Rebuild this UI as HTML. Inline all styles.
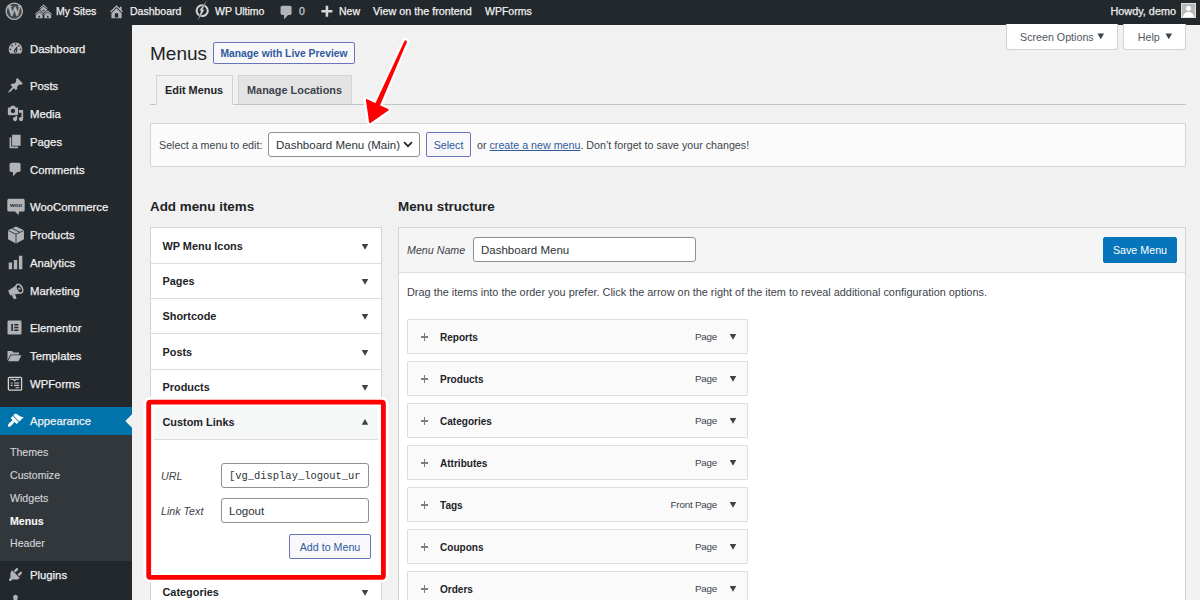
<!DOCTYPE html>
<html lang="en">
<head>
<meta charset="utf-8">
<title>Menus</title>
<style>
html,body{margin:0;padding:0;}
body{width:1200px;height:600px;overflow:hidden;position:relative;background:#f1f1f1;font-family:"Liberation Sans",sans-serif;font-size:10.7px;color:#3c434a;}
.a{position:absolute;}
.t{position:absolute;white-space:nowrap;line-height:14px;height:14px;}
.b{font-weight:bold;}
.i{font-style:italic;}
#bar{left:0;top:0;width:1200px;height:24.5px;background:#23282d;}
#side{left:0;top:24px;width:131.5px;height:576px;background:#23282d;}
#bar .t{color:#f0f0f1;font-size:10.5px;top:4px;-webkit-text-stroke:.25px #f0f0f1;}
#side .t{color:#f0f0f1;font-size:11.3px;left:30px;-webkit-text-stroke:.25px #f0f0f1;}
#side .s{color:#d0d3d5;font-size:10.6px;left:10px;-webkit-text-stroke:.15px #d0d3d5;}
.box{position:absolute;box-sizing:border-box;border:1px solid #d2d3d6;background:#fff;}
.btn{position:absolute;box-sizing:border-box;border:1px solid #6c74b8;border-radius:2px;background:#f8f8fa;color:#2f5a9e;text-align:center;white-space:nowrap;}
.inp{position:absolute;box-sizing:border-box;border:1px solid #8c8f94;border-radius:3px;background:#fff;}
.tri{position:absolute;width:6.6px;height:5.8px;background:#3c434a;clip-path:polygon(0 0,100% 0,50% 100%);margin-left:.7px;}
.triu{position:absolute;width:6.6px;height:5.8px;background:#3c434a;clip-path:polygon(0 100%,100% 100%,50% 0);margin-left:.7px;}
.mi{position:absolute;box-sizing:border-box;left:406.5px;width:341.5px;height:35px;border:1px solid #dedede;border-radius:1px;background:#fafafa;}
.pl{position:absolute;left:13px;top:16.3px;width:7.6px;height:1.5px;background:#7e7e7e;}
.pl:after{content:"";position:absolute;left:3.05px;top:-3.05px;width:1.5px;height:7.6px;background:#7e7e7e;}
.mi .t{top:10.5px;}
</style>
</head>
<body>
<!-- ADMIN BAR -->
<div id="bar" class="a">
<svg class="a" style="left:4.5px;top:2px;" width="18.5" height="18.5" viewBox="0 0 18 18"><circle cx="9" cy="9" r="7.900" fill="#b0b4b8" fill-opacity=".22" stroke="#b0b4b8" stroke-width="1.300"/><text x="9" y="13.900" font-family="'Liberation Serif',serif" font-size="14.500" font-weight="bold" text-anchor="middle" fill="#b4b7ba" stroke="#b4b7ba" stroke-width=".35" textLength="13.600" lengthAdjust="spacingAndGlyphs">W</text></svg>
<svg class="a" style="left:34.500px;top:3px;" width="17" height="17" viewBox="0 0 20 20"><path fill="#b0b4b8" d="M14.270 6.870L10 3.140 5.730 6.870 5 6.140l5-4.380 5 4.380zM14 8.420l-4.050 3.430L6 8.380v-.740l4-3.500 4 3.500v.780zM11 9.700V8H9v1.700h2zm-1.730 4.030L5 10 .730 13.730 0 13l5-4.380L10 13zm10 0L15 10l-4.270 3.730L10 13l5-4.380L20 13zM5 11l4 3.500V18H1v-3.500zm10 0l4 3.500V18h-8v-3.500zm-9 6v-2H4v2h2zm10 0v-2h-2v2h2z"/></svg>
<div class="t" style="left:56px;">My Sites</div>
<svg class="a" style="left:108px;top:3px;" width="17" height="17" viewBox="0 0 20 20"><path fill="#b0b4b8" d="M16 8.500l1.530 1.530-1.060 1.060L10 4.620l-6.470 6.470-1.060-1.060L10 2.500l4 4v-2h2v4zm-6-2.460l6 5.990V18H4v-5.970zM12 17v-5H8v5h4z"/></svg>
<div class="t" style="left:130px;">Dashboard</div>
<svg class="a" style="left:193px;top:0px;" width="18" height="22" viewBox="0 0 18 22"><ellipse cx="9.200" cy="10.700" rx="5.600" ry="5.400" fill="none" stroke="#d5d7d9" stroke-width="2"/><path d="M14.200 0L9.800 9.500l1.800.3L4.600 21l3.200-10.300-1.700-.2z" fill="#d5d7d9" stroke="#23282d" stroke-width=".5"/></svg>
<div class="t" style="left:215px;">WP Ultimo</div>
<svg class="a" style="left:277.500px;top:3.500px;" width="17" height="17" viewBox="0 0 20 20"><path fill="#b0b4b8" d="M5 2h9c1.100 0 2 .900 2 2v7c0 1.100-.900 2-2 2h-2l-5 5v-5H5c-1.100 0-2-.900-2-2V4c0-1.100.900-2 2-2z"/></svg>
<div class="t" style="left:299px;color:#a7aaad;">0</div>
<svg class="a" style="left:317.500px;top:3.500px;" width="17" height="17" viewBox="0 0 20 20"><path fill="#d5d7d9" d="M17 7v3h-5v5H9v-5H4V7h5V2h3v5h5z"/></svg>
<div class="t" style="left:339px;">New</div>
<div class="t" style="left:373px;font-size:10.800px;">View on the frontend</div>
<div class="t" style="left:485px;">WPForms</div>
<div class="t" style="left:1110.500px;font-size:10.850px;">Howdy, demo</div>
<div class="a" style="left:1181.200px;top:3.300px;width:14.600px;height:14.600px;background:#b9b9b9;overflow:hidden;box-sizing:border-box;border:1px solid #dedede;"><div class="a" style="left:4.300px;top:2px;width:4.600px;height:4.800px;border-radius:50%;background:#fff;"></div><div class="a" style="left:1.200px;top:7.300px;width:10.600px;height:10px;border-radius:50% 50% 0 0;background:#fff;"></div></div>
</div>
<!-- SIDEBAR -->
<div id="side" class="a">
<div class="a" style="left:0;top:382.700px;width:131.500px;height:28.300px;background:#0073aa;"></div>
<div class="a" style="left:125.300px;top:390.300px;width:6.700px;height:13.400px;background:#f1f1f1;clip-path:polygon(100% 0,0 50%,100% 100%);"></div>
<div class="a" style="left:0;top:411px;width:131.500px;height:126px;background:#32373c;"></div>
<svg class="a" style="left:7px;top:16.4px;" width="17" height="17" viewBox="0 0 20 20"><path fill="#b0b4b8" d="M3.760 16h12.480c1.100-1.370 1.760-3.110 1.760-5 0-4.420-3.580-8-8-8s-8 3.580-8 8c0 1.890.660 3.630 1.760 5zM10 4c.550 0 1 .450 1 1s-.450 1-1 1-1-.450-1-1 .450-1 1-1zM6 6c.550 0 1 .450 1 1s-.450 1-1 1-1-.450-1-1 .450-1 1-1zm8 0c.550 0 1 .450 1 1s-.450 1-1 1-1-.450-1-1 .450-1 1-1zm-5.370 5.550L12 7v6c0 1.100-.900 2-2 2s-2-.900-2-2c0-.570.240-1.080.630-1.450zM4 10c.550 0 1 .450 1 1s-.450 1-1 1-1-.450-1-1 .450-1 1-1zm12 0c.550 0 1 .450 1 1s-.450 1-1 1-1-.450-1-1 .450-1 1-1zm-5 3c0-.550-.450-1-1-1s-1 .450-1 1 .450 1 1 1 1-.450 1-1z"/></svg><div class="t b" style="top:18px;font-weight:normal;">Dashboard</div>
<svg class="a" style="left:7px;top:53.4px;" width="17" height="17" viewBox="0 0 20 20"><path fill="#b0b4b8" d="M10.440 3.020l1.820-1.820 6.360 6.350-1.830 1.820c-1.050-.680-2.480-.570-3.410.360l-.750.750c-.920.930-1.040 2.350-.350 3.410l-1.830 1.820-2.410-2.410-2.800 2.790c-.420.420-3.380 2.710-3.800 2.290s1.860-3.390 2.280-3.810l2.790-2.790L4.100 9.360l1.830-1.820c1.050.690 2.480.570 3.400-.360l.750-.750c.930-.920 1.050-2.350.360-3.410z"/></svg><div class="t b" style="top:55px;font-weight:normal;">Posts</div>
<svg class="a" style="left:7px;top:81.4px;" width="17" height="17" viewBox="0 0 20 20"><path fill="#b0b4b8" d="M13 11V4c0-.550-.450-1-1-1h-1.670L9 1H5L3.670 3H2c-.550 0-1 .450-1 1v7c0 .550.450 1 1 1h10c.550 0 1-.450 1-1zM7 4.500c1.380 0 2.500 1.120 2.500 2.500S8.380 9.500 7 9.500 4.500 8.380 4.500 7 5.620 4.500 7 4.500zM14 6h5v10.500c0 1.380-1.120 2.500-2.500 2.500S14 17.880 14 16.500s1.120-2.500 2.500-2.500c.170 0 .340.020.500.050V9h-3V6zm-4 8.050V13h2v3.500c0 1.380-1.120 2.500-2.500 2.500S7 17.880 7 16.500 8.120 14 9.500 14c.170 0 .340.020.500.050z"/></svg><div class="t b" style="top:83px;font-weight:normal;">Media</div>
<svg class="a" style="left:7px;top:109.4px;" width="17" height="17" viewBox="0 0 20 20"><path fill="#b0b4b8" d="M6 15V2h10v13H6zm-1 1h8v2H3V5h2v11z"/></svg><div class="t b" style="top:111px;font-weight:normal;">Pages</div>
<svg class="a" style="left:7px;top:137.4px;" width="17" height="17" viewBox="0 0 20 20"><path fill="#b0b4b8" d="M5 2h9c1.100 0 2 .900 2 2v7c0 1.100-.900 2-2 2h-2l-5 5v-5H5c-1.100 0-2-.900-2-2V4c0-1.100.900-2 2-2z"/></svg><div class="t b" style="top:139px;font-weight:normal;">Comments</div>
<svg class="a" style="left:6.5px;top:174.0px;" width="18" height="18" viewBox="0 0 17 17"><path d="M1.800 0.800h13.400a1.500 1.500 0 0 1 1.500 1.500v9a1.500 1.500 0 0 1-1.500 1.500h-3.700l-.6 3.200-3.400-3.200h-5.700a1.500 1.500 0 0 1-1.500-1.500v-9a1.500 1.500 0 0 1 1.500-1.500z" fill="#b0b4b8"/><text x="8.500" y="8.800" font-family="'Liberation Sans',sans-serif" font-size="5.800" font-weight="bold" text-anchor="middle" fill="#23282d">woo</text></svg><div class="t b" style="top:176px;font-weight:normal;">WooCommerce</div>
<svg class="a" style="left:6.5px;top:202.0px;" width="18" height="18" viewBox="0 0 17 17"><path d="M8.500 0.500L16 4v8.600l-7.500 3.900-7.500-3.900v-8.600z" fill="#b0b4b8"/><path d="M1.300 4.300L8.500 7.800l7.200-3.500M8.500 7.800v8.400" stroke="#23282d" stroke-width=".8" fill="none"/><path d="M4.800 2.300l7.400 3.700" stroke="#23282d" stroke-width=".8"/></svg><div class="t b" style="top:204px;font-weight:normal;">Products</div>
<svg class="a" style="left:7px;top:230.4px;" width="17" height="17" viewBox="0 0 20 20"><path fill="#b0b4b8" d="M18 18V2h-4v16h4zm-6 0V7H8v11h4zm-6 0v-8H2v8h4z"/></svg><div class="t b" style="top:232px;font-weight:normal;">Analytics</div>
<svg class="a" style="left:6.5px;top:258.0px;" width="18" height="18" viewBox="0 0 17 17"><path d="M1 8.300L9.800 2.300l4 8.200-10.600 2.300z" fill="#b0b4b8"/><path d="M4.600 12.400l3-.7 1.500 3.900-2.700.8z" fill="#b0b4b8"/><ellipse cx="11.700" cy="6.300" rx="2.700" ry="4.500" transform="rotate(-27 11.700 6.300)" fill="#23282d" stroke="#b0b4b8" stroke-width="1.500"/><circle cx="11.700" cy="6.300" r="1.100" fill="#b0b4b8"/></svg><div class="t b" style="top:260px;font-weight:normal;">Marketing</div>
<svg class="a" style="left:5.700px;top:294.500px;" width="17" height="17" viewBox="0 0 17 17"><rect x="1.500" y="1.500" width="14" height="14" rx="1.200" fill="#b0b4b8"/><path d="M5.300 5h1.600v7h-1.600zM8.300 5h4v1.400h-4zM8.300 7.800h4v1.400h-4zM8.300 10.600h4v1.400h-4z" fill="#23282d"/></svg><div class="t b" style="top:297px;font-weight:normal;">Elementor</div>
<svg class="a" style="left:6px;top:323.500px;" width="17" height="17" viewBox="0 0 17 17"><path d="M1.500 3h4.500l1.500 1.500h5.500v2h-8.500l-3 6z" fill="#b0b4b8"/><path d="M5 7.300h10.500l-3 6h-10.500z" fill="#b0b4b8"/></svg><div class="t b" style="top:325px;font-weight:normal;">Templates</div>
<svg class="a" style="left:6.500px;top:352px;" width="16" height="16" viewBox="0 0 17 17"><rect x="1.500" y="1.500" width="14" height="13.500" rx="1" fill="none" stroke="#d0d2d4" stroke-width="1.400"/><path d="M3.500 3.500h3l1.500 1.500 1.500-1.500h3.500" stroke="#d0d2d4" stroke-width="1.200" fill="none"/><path d="M4 7.500h2M7.500 7.500h5.500M4 10h2M7.500 10h5.500M9 12.500h4" stroke="#d0d2d4" stroke-width="1.200"/></svg><div class="t b" style="top:353px;font-weight:normal;">WPForms</div>
<svg class="a" style="left:7px;top:388.4px;" width="17" height="17" viewBox="0 0 20 20"><path fill="#fff" d="M14.480 11.060L7.410 3.990l1.500-1.500c.500-.560 2.300-.470 3.510.320 1.210.800 1.430 1.280 2.910 2.100 1.180.640 2.450 1.260 4.450.850zm-.710.710L6.700 4.700 4.930 6.470c-.390.390-.390 1.020 0 1.410l1.060 1.060c.390.390.390 1.030 0 1.420-.600.600-1.430 1.110-2.210 1.690-.350.260-.700.530-1.010.840C1.430 14.230.400 16.080 1.400 17.070c.990 1 2.840-.030 4.180-1.360.310-.310.580-.660.850-1.020.570-.780 1.080-1.610 1.690-2.210.390-.390 1.020-.390 1.410 0l1.060 1.060c.390.390 1.020.390 1.410 0z"/></svg><div class="t b" style="top:390px;font-weight:normal;">Appearance</div>
<svg class="a" style="left:7px;top:542.4px;" width="17" height="17" viewBox="0 0 20 20"><path fill="#b0b4b8" d="M13.110 4.360L9.870 7.600 8 5.730l3.240-3.240c.350-.340 1.050-.200 1.560.320.520.510.660 1.210.310 1.550zm-8 1.770l.910-1.120 9.010 9.010-1.190.840c-.710.710-2.630 1.160-3.820 1.160H6.140L4.900 17.260c-.590.590-1.540.590-2.120 0-.590-.580-.590-1.530 0-2.120l1.240-1.240v-3.880c0-1.130.400-3.190 1.090-3.890zm7.260 3.970l3.240-3.240c.340-.350 1.040-.210 1.550.310.520.510.660 1.210.310 1.550l-3.240 3.250z"/></svg><div class="t b" style="top:544px;font-weight:normal;">Plugins</div>
<div class="t s" style="top:421px;">Themes</div>
<div class="t s" style="top:444px;">Customize</div>
<div class="t s" style="top:467px;">Widgets</div>
<div class="t s b" style="color:#fff;top:490px;">Menus</div>
<div class="t s" style="top:512px;">Header</div>
<svg class="a" style="left:7px;top:569.300px;" width="17" height="17" viewBox="0 0 20 20"><path fill="#b0b4b8" d="M10 9.250c-2.270 0-2.730-3.440-2.730-3.440C7 4.020 7.820 2 9.970 2c2.160 0 2.980 2.020 2.710 3.810 0 0-.410 3.440-2.680 3.440zm0 2.570L12.720 10c2.390 0 4.520 2.330 4.520 4.530v2.490s-3.650 1.130-7.240 1.130c-3.650 0-7.240-1.130-7.240-1.130v-2.490c0-2.250 1.940-4.480 4.470-4.480z"/></svg>
</div>
<!-- MAIN -->
<div id="main">
<!-- screen options / help -->
<div class="box" style="left:1006px;top:24px;width:112px;height:26px;border-top:none;border-radius:0 0 3px 3px;"></div>
<div class="t" style="left:1020px;top:30px;color:#50575e;">Screen Options</div>
<div class="tri" style="left:1096.800px;top:33.400px;"></div>
<div class="box" style="left:1123px;top:24px;width:63px;height:26px;border-top:none;border-radius:0 0 3px 3px;"></div>
<div class="t" style="left:1137.800px;top:30px;color:#50575e;">Help</div>
<div class="tri" style="left:1164.800px;top:33.400px;"></div>

<!-- title -->
<div class="t" style="left:150px;top:41.600px;font-size:19px;line-height:24px;height:24px;color:#1d2327;">Menus</div>
<div class="btn b" style="left:213px;top:42px;width:142px;height:22px;line-height:22px;font-size:10.3px;">Manage with Live Preview</div>

<!-- tabs -->
<div class="a" style="left:150px;top:104px;width:1036px;height:1px;background:#c3c4c7;"></div>
<div class="box" style="left:156px;top:75px;width:77px;height:30px;background:#f1f1f1;border-bottom-color:#f1f1f1;"></div>
<div class="t b" style="left:165px;top:83px;font-size:10.9px;color:#1d2327;">Edit Menus</div>
<div class="box" style="left:238px;top:75px;width:114px;height:29px;background:#e4e4e5;border-bottom:none;"></div>
<div class="t b" style="left:247px;top:83px;font-size:10.9px;color:#3c434a;">Manage Locations</div>

<!-- select menu panel -->
<div class="box" style="left:150px;top:123px;width:1036px;height:43.500px;background:#fbfbfb;border-color:#d5d6d8;"></div>
<div class="t" style="left:159px;top:138px;">Select a menu to edit:</div>
<div class="inp" style="left:268px;top:132px;width:152px;height:25px;"></div>
<div class="t" style="left:276px;top:138px;font-size:11.5px;color:#2c3338;">Dashboard Menu (Main)</div>
<svg class="a" style="left:403px;top:141px;" width="10" height="7" viewBox="0 0 10 7"><path d="M1 1.2 L5 5.2 L9 1.2" fill="none" stroke="#23282d" stroke-width="1.7"/></svg>
<div class="btn" style="left:426px;top:132px;width:45px;height:25px;line-height:25px;">Select</div>
<div class="t" style="left:477px;top:138px;">or <span style="color:#2f5a9e;text-decoration:underline;">create a new menu</span>. Don’t forget to save your changes!</div>

<!-- left column -->
<div class="t b" style="left:150px;top:200px;font-size:13.4px;color:#1d2327;">Add menu items</div>
<div class="box" style="left:150px;top:227px;width:232px;height:380px;"></div>
<div class="t b" style="left:162.500px;top:239px;color:#1d2327;font-size:10.9px;">WP Menu Icons</div><div class="tri" style="left:361px;top:244px;"></div>
<div class="a" style="left:151px;top:263px;width:230px;height:1px;background:#dcdcde;"></div>
<div class="t b" style="left:162.500px;top:274px;color:#1d2327;font-size:10.9px;">Pages</div><div class="tri" style="left:361px;top:279px;"></div>
<div class="a" style="left:151px;top:298px;width:230px;height:1px;background:#dcdcde;"></div>
<div class="t b" style="left:162.500px;top:309px;color:#1d2327;font-size:10.9px;">Shortcode</div><div class="tri" style="left:361px;top:314px;"></div>
<div class="a" style="left:151px;top:333px;width:230px;height:1px;background:#dcdcde;"></div>
<div class="t b" style="left:162.500px;top:345px;color:#1d2327;font-size:10.9px;">Posts</div><div class="tri" style="left:361px;top:350px;"></div>
<div class="a" style="left:151px;top:369px;width:230px;height:1px;background:#dcdcde;"></div>
<div class="t b" style="left:162.500px;top:380px;color:#1d2327;font-size:10.9px;">Products</div><div class="tri" style="left:361px;top:385px;"></div>
<div class="a" style="left:151px;top:404px;width:230px;height:36px;background:#f6f7f7;border-top:1px solid #dcdcde;border-bottom:1px solid #dcdcde;box-sizing:border-box;"></div>
<div class="t b" style="left:162.500px;top:415px;color:#1d2327;font-size:10.9px;">Custom Links</div><div class="triu" style="left:361px;top:419px;"></div>
<div class="t i" style="left:161px;top:469px;">URL</div>
<div class="inp" style="left:221px;top:463px;width:148px;height:25px;"></div>
<div class="t" style="left:229px;top:469px;font-family:'Liberation Mono',monospace;font-size:10.45px;color:#2c3338;">[vg_display_logout_ur</div>
<div class="t i" style="left:161px;top:504px;">Link Text</div>
<div class="inp" style="left:221px;top:498px;width:148px;height:25px;"></div>
<div class="t" style="left:229px;top:504px;font-size:11.5px;color:#2c3338;">Logout</div>
<div class="btn" style="left:289px;top:534px;width:82px;height:25px;line-height:24px;">Add to Menu</div>
<div class="a" style="left:151px;top:575px;width:230px;height:1px;background:#dcdcde;"></div>
<div class="t b" style="left:162.500px;top:585px;color:#1d2327;font-size:10.9px;">Categories</div><div class="tri" style="left:361px;top:590px;"></div>

<!-- red box -->
<svg class="a" style="left:136px;top:390px;" width="260" height="200" viewBox="136 390 260 200">
<defs><filter id="gl2" x="-5%" y="-5%" width="110%" height="110%"><feGaussianBlur stdDeviation=".6"/></filter></defs>
<rect x="148.700" y="402.100" width="234.700" height="175.200" rx="1.800" fill="none" stroke="#fff" stroke-width="10.600" stroke-opacity=".92" filter="url(#gl2)"/>
<rect x="148.700" y="402.100" width="234.700" height="175.200" rx="1.500" fill="none" stroke="#fe0000" stroke-width="4.800" stroke-linejoin="round"/>
</svg>

<!-- right column -->
<div class="t b" style="left:398px;top:200px;font-size:13.4px;color:#1d2327;">Menu structure</div>
<div class="box" style="left:398px;top:227px;width:788px;height:380px;"></div>
<div class="a" style="left:399px;top:228px;width:786px;height:45px;background:#f5f5f5;border-bottom:1px solid #dcdcde;box-sizing:border-box;"></div>
<div class="t i" style="left:407px;top:243px;">Menu Name</div>
<div class="inp" style="left:473px;top:237px;width:223px;height:25px;"></div>
<div class="t" style="left:481px;top:243px;font-size:11.5px;color:#2c3338;">Dashboard Menu</div>
<div class="btn" style="left:1103px;top:237px;width:74px;height:26px;line-height:25.5px;background:#0775bb;border-color:#0775bb;color:#fff;">Save Menu</div>
<div class="t" style="left:407px;top:285px;font-size:10.9px;">Drag the items into the order you prefer. Click the arrow on the right of the item to reveal additional configuration options.</div>
<div class="mi" style="top:319px;"><div class="pl"></div><div class="t b" style="left:32.5px;color:#1d2327;font-size:10.05px;">Reports</div><div class="t" style="right:30px;top:10px;font-size:9.800px;letter-spacing:-.2px;">Page</div><div class="tri" style="left:321.500px;top:14px;"></div></div>
<div class="mi" style="top:361px;"><div class="pl"></div><div class="t b" style="left:32.5px;color:#1d2327;font-size:10.05px;">Products</div><div class="t" style="right:30px;top:10px;font-size:9.800px;letter-spacing:-.2px;">Page</div><div class="tri" style="left:321.500px;top:14px;"></div></div>
<div class="mi" style="top:403px;"><div class="pl"></div><div class="t b" style="left:32.5px;color:#1d2327;font-size:10.05px;">Categories</div><div class="t" style="right:30px;top:10px;font-size:9.800px;letter-spacing:-.2px;">Page</div><div class="tri" style="left:321.500px;top:14px;"></div></div>
<div class="mi" style="top:445px;"><div class="pl"></div><div class="t b" style="left:32.5px;color:#1d2327;font-size:10.05px;">Attributes</div><div class="t" style="right:30px;top:10px;font-size:9.800px;letter-spacing:-.2px;">Page</div><div class="tri" style="left:321.500px;top:14px;"></div></div>
<div class="mi" style="top:487px;"><div class="pl"></div><div class="t b" style="left:32.5px;color:#1d2327;font-size:10.05px;">Tags</div><div class="t" style="right:30px;top:10px;font-size:9.800px;letter-spacing:-.2px;">Front Page</div><div class="tri" style="left:321.500px;top:14px;"></div></div>
<div class="mi" style="top:529px;"><div class="pl"></div><div class="t b" style="left:32.5px;color:#1d2327;font-size:10.05px;">Coupons</div><div class="t" style="right:30px;top:10px;font-size:9.800px;letter-spacing:-.2px;">Page</div><div class="tri" style="left:321.500px;top:14px;"></div></div>
<div class="mi" style="top:571px;"><div class="pl"></div><div class="t b" style="left:32.5px;color:#1d2327;font-size:10.05px;">Orders</div><div class="t" style="right:30px;top:10px;font-size:9.800px;letter-spacing:-.2px;">Page</div><div class="tri" style="left:321.500px;top:14px;"></div></div>

<!-- red arrow -->
<svg class="a" style="left:340px;top:30px;" width="80" height="105" viewBox="0 0 80 105">
<defs><filter id="gl" x="-20%" y="-20%" width="140%" height="140%"><feGaussianBlur stdDeviation=".7"/></filter></defs>
<path d="M65.3 11.3 L66.1 11.7 L38.95 75.7 L47.8 79.8 L30 92.2 L26.8 70 L35.85 74.3 Z" fill="#fff" stroke="#fff" stroke-width="6.400" stroke-linejoin="round" opacity=".95" filter="url(#gl)"/>
<path d="M65.3 11.3 L66.1 11.7 L38.95 75.7 L47.8 79.8 L30 92.2 L26.8 70 L35.85 74.3 Z" fill="#fe0000" stroke="#fe0000" stroke-width="1.800" stroke-linejoin="round"/>
</svg>
</div>
</body>
</html>
